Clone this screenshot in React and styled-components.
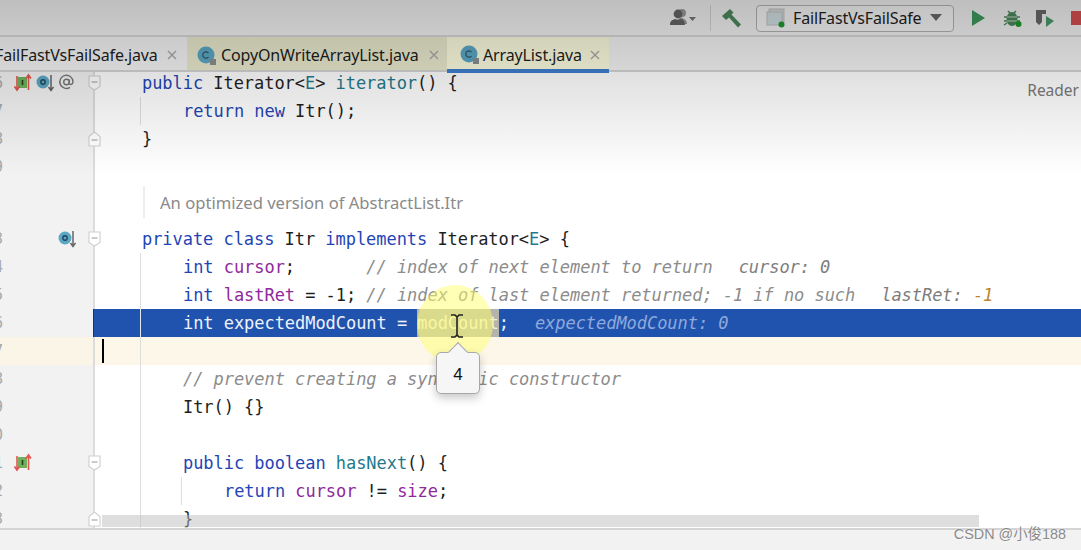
import React from 'react'
import styled, { createGlobalStyle } from 'styled-components'

const GlobalStyle = createGlobalStyle`
    html, body {
        margin:0;
        padding:0;
        background:#fff;
    }
`
const Page = styled.div`
    position:relative;
    width:1081px;
    height:550px;
    overflow:hidden;
    display:flex;
    flex-direction:column;
    background:#fff;
    font-family:"Noto Sans", "Open Sans", sans-serif;
`
// the video frame fades out towards the top
const TopFade = styled.div`
    position:absolute;
    left:0;
    right:0;
    top:0;
    height:175px;
    z-index:5;
    pointer-events:none;
    background:linear-gradient(rgba(0,0,0,.22) 0, rgba(0,0,0,.12) 72px, rgba(0,0,0,0) 175px);
`
const Toolbar = styled.div`
    height:37px;
    flex:none;
    box-sizing:border-box;
    display:flex;
    align-items:center;
    justify-content:flex-end;
    background:#f4f4f4;
    border-bottom:2px solid #d8d8d8;
    padding-top:1px;
`
const ToolIcon = styled.svg`
    display:block;
    flex:none;
    margin-left:${({ $gap }) => $gap}px;
    margin-right:${({ $end }) => $end || 0}px;
`
const Divider = styled.div`
    width:1px;
    height:26px;
    margin-left:12px;
    background:#d4d4d4;
`
const RunConfig = styled.div`
    width:198px;
    height:27px;
    box-sizing:border-box;
    margin-left:14px;
    padding-left:9px;
    display:flex;
    align-items:center;
    border:1px solid #b4b4b4;
    border-radius:4px;
    font-size:16px;
    letter-spacing:-.15px;
    color:#222;
    background:#f8f8f8;
`
const RunName = styled.span`
    margin-left:7px;
    width:137px;
`
const TabBar = styled.div`
    height:35px;
    flex:none;
    box-sizing:border-box;
    display:flex;
    background:#f4f4f4;
    border-bottom:2px solid #d4d4d4;
    position:relative;
`
const Tab = styled.div`
    flex:none;
    width:${({ $width }) => $width}px;
    height:${({ $active }) => ($active ? 36 : 33)}px;
    box-sizing:border-box;
    padding-left:${({ $pad }) => $pad}px;
    padding-top:3px;
    display:flex;
    align-items:center;
    font-size:16px;
    letter-spacing:-.13px;
    color:#1d1d1d;
    white-space:nowrap;
    background:${({ $tint }) => $tint};
    border-bottom:${({ $active }) => ($active ? '4px solid #3f7fd0' : '0')};
`
const TabName = styled.span`
    margin-left:${({ $gap }) => $gap}px;
    margin-right:${({ $tail }) => $tail}px;
`
const Close = styled.svg`
    display:block;
    flex:none;
`
const Editor = styled.div`
    flex:1;
    position:relative;
    overflow:hidden;
    min-height:0;
`
const Lines = styled.div`
    margin-top:-3px;
`
const Row = styled.div`
    display:flex;
    height:${({ $height }) => $height || 28}px;
    background:${({ $current }) => ($current ? '#fdf7ea' : 'transparent')};
`
const Gutter = styled.div`
    width:95px;
    flex:none;
    box-sizing:border-box;
    display:flex;
    align-items:center;
    background:${({ $current }) => ($current ? '#fbf5e8' : '#f2f2f2')};
    border-right:2px solid #dcdcdc;
`
const LineNo = styled.div`
    width:14px;
    flex:none;
    overflow:hidden;
    font-family:"DejaVu Sans Mono", monospace;
    font-size:15px;
    color:#a8a8a8;
    text-indent:-6px;
`
const Marks = styled.div`
    width:66px;
    flex:none;
    display:flex;
`
const Mark = styled.div`
    width:22px;
    height:20px;
    flex:none;
`
const FoldMark = styled.svg`
    display:block;
    flex:none;
    margin-left:8px;
    position:relative;
    z-index:1;
`
const Code = styled.div`
    flex:1;
    position:relative;
    box-sizing:border-box;
    white-space:pre;
    line-height:28px;
    font-family:"DejaVu Sans Mono", monospace;
    font-size:17px;
    letter-spacing:-.05px;
    color:#1f1f1f;
    margin-left:${({ $selected }) => ($selected ? '-2px' : '0')};
    padding-left:${({ $indent, $selected }) => 47 + ($indent || 0) * 41 + ($selected ? 2 : 0)}px;
    background-color:${({ $selected }) => ($selected ? '#2053ae' : 'transparent')};
    box-shadow:${({ $selected }) => ($selected ? 'inset 1px 0 0 #16336b' : 'none')};
    background-image:${({ $guides, $selected }) => ($guides || [])
        .map(() => `linear-gradient(${$selected ? '#dfe7f5, #dfe7f5' : '#dedede, #dedede'})`)
        .join(',') || 'none'};
    background-size:1px 100%;
    background-repeat:no-repeat;
    background-position:${({ $guides, $selected }) => ($guides || []).map((g) => `${g + ($selected ? 2 : 0)}px 0`).join(',') || '0 0'};
`
const Kw = styled.span`
    color:#1f45b5;
`
const Type = styled.span`
    color:#1f7a8c;
`
const Field = styled.span`
    color:#8f2a9c;
`
const Comment = styled.span`
    color:#8c8c8c;
    font-style:italic;
`
const Hint = styled.span`
    margin-left:26px;
    color:#7d7d7d;
    font-style:italic;
`
const HintNum = styled.span`
    color:#c0852a;
`
const OnBlue = styled.span`
    color:#eef2fa;
`
const BlueHint = styled.span`
    margin-left:26px;
    color:#8fa9dc;
    font-style:italic;
`
const Usage = styled.span`
    display:inline-block;
    height:28px;
    background:#b4b4ac;
    color:#f2efd0;
`
const DocBlock = styled.div`
    flex:1;
    margin:5px 0 7px 48px;
    padding-left:15px;
    display:flex;
    align-items:center;
    border-left:2px solid #ededed;
    font-size:16.6px;
    color:#8a8a8a;
`
const Caret = styled.div`
    position:absolute;
    left:7px;
    top:2px;
    width:2px;
    height:24px;
    background:#000;
`
const Reader = styled.div`
    position:absolute;
    right:2px;
    top:7px;
    z-index:3;
    font-size:15.5px;
    color:#7a7a7a;
`
const Scrollbar = styled.div`
    position:absolute;
    left:102px;
    bottom:1px;
    width:877px;
    height:12px;
    z-index:2;
    background:rgba(190,190,190,.5);
`
const Halo = styled.div`
    position:absolute;
    left:417px;
    top:213px;
    width:76px;
    height:78px;
    border-radius:50%;
    z-index:3;
    background:rgba(255,255,110,.5);
`
const IBeam = styled.svg`
    position:absolute;
    left:450px;
    top:242px;
    z-index:4;
`
const Tooltip = styled.div`
    position:absolute;
    left:436px;
    top:280px;
    width:44px;
    height:42px;
    box-sizing:border-box;
    padding-top:3px;
    z-index:4;
    display:flex;
    align-items:center;
    justify-content:center;
    border:1px solid #a8a8a8;
    border-radius:5px;
    background:#f6f6f6;
    box-shadow:0 4px 10px rgba(0,0,0,.22);
    font-family:"Liberation Sans", sans-serif;
    font-size:17px;
    color:#111;
    &::before {
        content:"";
        position:absolute;
        left:14px;
        top:-8px;
        width:14px;
        height:14px;
        box-sizing:border-box;
        transform:rotate(45deg);
        background:#f6f6f6;
        border-left:1px solid #a8a8a8;
        border-top:1px solid #a8a8a8;
    }
`
const StatusBar = styled.div`
    height:20px;
    flex:none;
    background:#f2f2f2;
    border-top:2px solid #d4d4d4;
`
const Watermark = styled.div`
    position:absolute;
    right:15px;
    bottom:7px;
    z-index:6;
    font-family:"Liberation Sans", "Noto Sans CJK SC", sans-serif;
    font-size:14.4px;
    color:#8a8a8a;
    text-shadow:0 0 2px #fff;
`

function FileIcon() {
    return (
        <svg width="19" height="19" viewBox="0 0 19 19" style={{ flex: 'none' }}>
            <circle cx="9" cy="9" r="8.5" fill="#5ba7c4" />
            <path d="M11.500 7a3.200 3.200 0 1 0 0 4" fill="none" stroke="#2c5466" strokeWidth="1.2" />
            <rect x="13" y="13" width="6" height="6" fill="#8a8f92" />
        </svg>
    )
}

function CloseIcon({ color }) {
    return (
        <Close width="10" height="10" viewBox="0 0 10 10">
            <path d="M1 1l8 8M9 1l-8 8" stroke={color} strokeWidth="1.4" fill="none" />
        </Close>
    )
}

function OverrideIcon() {
    return (
        <svg width="18" height="20" viewBox="0 0 18 20">
            <rect x="4" y="4" width="9" height="11" fill="#6fb05c" />
            <path d="M8.500 7v5" stroke="#26401e" strokeWidth="1.6" />
            <path d="M3 3v14M0.500 13.500L3 17l2.500-3.500" stroke="#e0554e" strokeWidth="1.6" fill="none" />
            <path d="M14.500 17V2M12 5.500L14.500 2 17 5.500" stroke="#e0554e" strokeWidth="1.6" fill="none" />
        </svg>
    )
}

function ImplIcon() {
    return (
        <svg width="18" height="20" viewBox="0 0 18 20">
            <circle cx="7" cy="9" r="6.500" fill="#5ba7c4" />
            <circle cx="7" cy="9" r="2.200" fill="none" stroke="#23475a" strokeWidth="1.400" />
            <path d="M15 2v15M12.500 14l2.500 3.500 2.500-3.500" stroke="#666" strokeWidth="1.500" fill="none" />
        </svg>
    )
}

function AtIcon() {
    return (
        <svg width="17" height="20" viewBox="0 0 17 20">
            <circle cx="8.500" cy="9" r="2.800" fill="none" stroke="#777" strokeWidth="1.400" />
            <path d="M11.300 6.400v3.800c0 2 3.700 1.800 3.700-1.400a6.600 6.600 0 1 0-3 5.600" fill="none" stroke="#777" strokeWidth="1.400" />
        </svg>
    )
}

// open = block start (point down), close = block end (point up)
function Fold({ end }) {
    const d = end ? 'M1 5.500L6.500 1 12 5.500V15H1z' : 'M1 1h11v10.500L6.500 15 1 11.500z'
    return (
        <FoldMark width="13" height="16" viewBox="0 0 13 16">
            <path d={d} fill="#fff" stroke="#d2d2d2" strokeWidth="1.200" />
            <path d={end ? 'M3.500 9h6' : 'M3.500 7h6'} stroke="#a8a8a8" strokeWidth="1.200" />
        </FoldMark>
    )
}

function Line({ no, marks, fold, foldEnd, indent, guides, selected, current, children }) {
    return (
        <Row $current={current}>
            <Gutter $current={current}>
                <LineNo>{no}</LineNo>
                <Marks>{marks}</Marks>
                {fold && <Fold end={foldEnd} />}
            </Gutter>
            <Code $indent={indent} $guides={guides} $selected={selected}>
                {children}
            </Code>
        </Row>
    )
}

export default function App() {
    return (
        <Page>
            <GlobalStyle />
            <TopFade />
            <Toolbar>
                <ToolIcon width="30" height="20" viewBox="0 0 26 20" $gap={0}>
                    <circle cx="12" cy="5" r="4" fill="#9a9a9a" />
                    <path d="M11 9c3 2 6 3 6 7H8v-4z" fill="#9a9a9a" />
                    <circle cx="8" cy="6" r="4.400" fill="#666" />
                    <path d="M0 17c0-5 3-5 5-6 2 1 4 1 6 0 2 1 4 2 4 6z" fill="#666" />
                    <path d="M19 9h7l-3.500 4z" fill="#777" />
                </ToolIcon>
                <Divider />
                <ToolIcon width="21" height="20" viewBox="0 0 21 20" $gap={10}>
                    <path d="M1 8l8-7 3.500 3.500-2 2L20 16.500 17 19.500 8 9.500 5 12z" fill="#4c8a5c" />
                </ToolIcon>
                <RunConfig>
                    <svg width="20" height="20" viewBox="0 0 20 20" style={{ flex: 'none' }}>
                        <rect x="3" y="1" width="15" height="13" fill="#dcdcdc" stroke="#c4c4c4" />
                        <rect x="1" y="4" width="15" height="13" fill="#d4e2e6" stroke="#c4c4c4" />
                        <circle cx="15.500" cy="16.500" r="3" fill="#1e9a2e" />
                    </svg>
                    <RunName>FailFastVsFailSafe</RunName>
                    <svg width="12" height="8" viewBox="0 0 12 8" style={{ flex: 'none' }}>
                        <path d="M0 0h12L6 7z" fill="#6a6a6a" />
                    </svg>
                </RunConfig>
                <ToolIcon width="14" height="16" viewBox="0 0 14 16" $gap={18}>
                    <path d="M0 0l13 8-13 8z" fill="#3f9a5e" />
                </ToolIcon>
                <ToolIcon width="20" height="20" viewBox="0 0 20 20" $gap={17}>
                    <path d="M5 3l2 2M13 3l-2 2M1 9h3M1 13h3M1 17l3-2M14 9h3M14 13h3" stroke="#4c8a5c" strokeWidth="1.500" />
                    <ellipse cx="9" cy="11" rx="5.500" ry="7" fill="#4c8a5c" />
                    <path d="M4 9h10M4 13h10" stroke="#c8d8cc" strokeWidth="1.200" />
                    <circle cx="15.500" cy="16" r="3" fill="#1e9a2e" />
                </ToolIcon>
                <ToolIcon width="20" height="20" viewBox="0 0 20 20" $gap={12}>
                    <path d="M1 2h10v4H7v8l-3 3-3-3z" fill="#6a6a6a" />
                    <path d="M11 8l8 5-8 6z" fill="#4c9a6c" />
                </ToolIcon>
                <ToolIcon width="13" height="14" viewBox="0 0 13 14" $gap={16} $end={-3}>
                    <rect width="13" height="14" fill="#d85050" />
                </ToolIcon>
            </Toolbar>
            <TabBar>
                <Tab $width={187} $pad={0} $tint="transparent">
                    <TabName $gap={-5} $tail={9}>FailFastVsFailSafe.java</TabName>
                    <CloseIcon color="#a8a8a8" />
                </Tab>
                <Tab $width={260} $pad={10} $tint="#eaeace">
                    <FileIcon />
                    <TabName $gap={5} $tail={10}>CopyOnWriteArrayList.java</TabName>
                    <CloseIcon color="#a8a8a8" />
                </Tab>
                <Tab $width={162} $pad={13} $tint="#fdfde0" $active>
                    <FileIcon />
                    <TabName $gap={4} $tail={8}>ArrayList.java</TabName>
                    <CloseIcon color="#a8a8a8" />
                </Tab>
            </TabBar>
            <Editor>
                <Reader>Reader</Reader>
                <Lines>
                    <Line no="6" fold marks={<><Mark><OverrideIcon /></Mark><Mark><ImplIcon /></Mark><Mark><AtIcon /></Mark></>}>
                        <Kw>public</Kw> Iterator&lt;<Type>E</Type>&gt; <Type>iterator</Type>() {'{'}
                    </Line>
                    <Line no="7" indent={1} guides={[45]}>
                        <Kw>return new</Kw> Itr();
                    </Line>
                    <Line no="8" fold foldEnd>{'}'}</Line>
                    <Line no="9" />
                    <Row $height={44}>
                        <Gutter />
                        <DocBlock>An optimized version of AbstractList.Itr</DocBlock>
                    </Row>
                    <Line no="3" fold marks={<><Mark /><Mark /><Mark><ImplIcon /></Mark></>}>
                        <Kw>private class</Kw> Itr <Kw>implements</Kw> Iterator&lt;<Type>E</Type>&gt; {'{'}
                    </Line>
                    <Line no="4" indent={1} guides={[45]}>
                        <Kw>int</Kw> <Field>cursor</Field>;       <Comment>// index of next element to return</Comment><Hint>cursor: 0</Hint>
                    </Line>
                    <Line no="5" indent={1} guides={[45]}>
                        <Kw>int</Kw> <Field>lastRet</Field> = -1; <Comment>// index of last element returned; -1 if no such</Comment><Hint>lastRet: <HintNum>-1</HintNum></Hint>
                    </Line>
                    <Line no="6" indent={1} guides={[45]} selected>
                        <OnBlue>int expectedModCount = </OnBlue><Usage>modCount</Usage><OnBlue>;</OnBlue><BlueHint>expectedModCount: 0</BlueHint>
                    </Line>
                    <Line no="7" current guides={[45]}>
                        <Caret />
                    </Line>
                    <Line no="8" indent={1} guides={[45]}>
                        <Comment>// prevent creating a synthetic constructor</Comment>
                    </Line>
                    <Line no="9" indent={1} guides={[45]}>Itr() {'{}'}</Line>
                    <Line no="0" guides={[45]} />
                    <Line no="1" fold indent={1} guides={[45]} marks={<Mark><OverrideIcon /></Mark>}>
                        <Kw>public boolean</Kw> <Type>hasNext</Type>() {'{'}
                    </Line>
                    <Line no="2" indent={2} guides={[45, 86]}>
                        <Kw>return</Kw> <Field>cursor</Field> != <Field>size</Field>;
                    </Line>
                    <Line no="3" fold foldEnd indent={1} guides={[45]}>{'}'}</Line>
                </Lines>
                <Scrollbar />
                <Halo />
                <IBeam width="14" height="24" viewBox="0 0 14 24">
                    <path d="M1 1h4l2 2 2-2h4M7 3v18M1 23h4l2-2 2 2h4" fill="none" stroke="#222" strokeWidth="1.600" />
                </IBeam>
                <Tooltip>4</Tooltip>
            </Editor>
            <StatusBar />
            <Watermark>CSDN @小俊188</Watermark>
        </Page>
    )
}
